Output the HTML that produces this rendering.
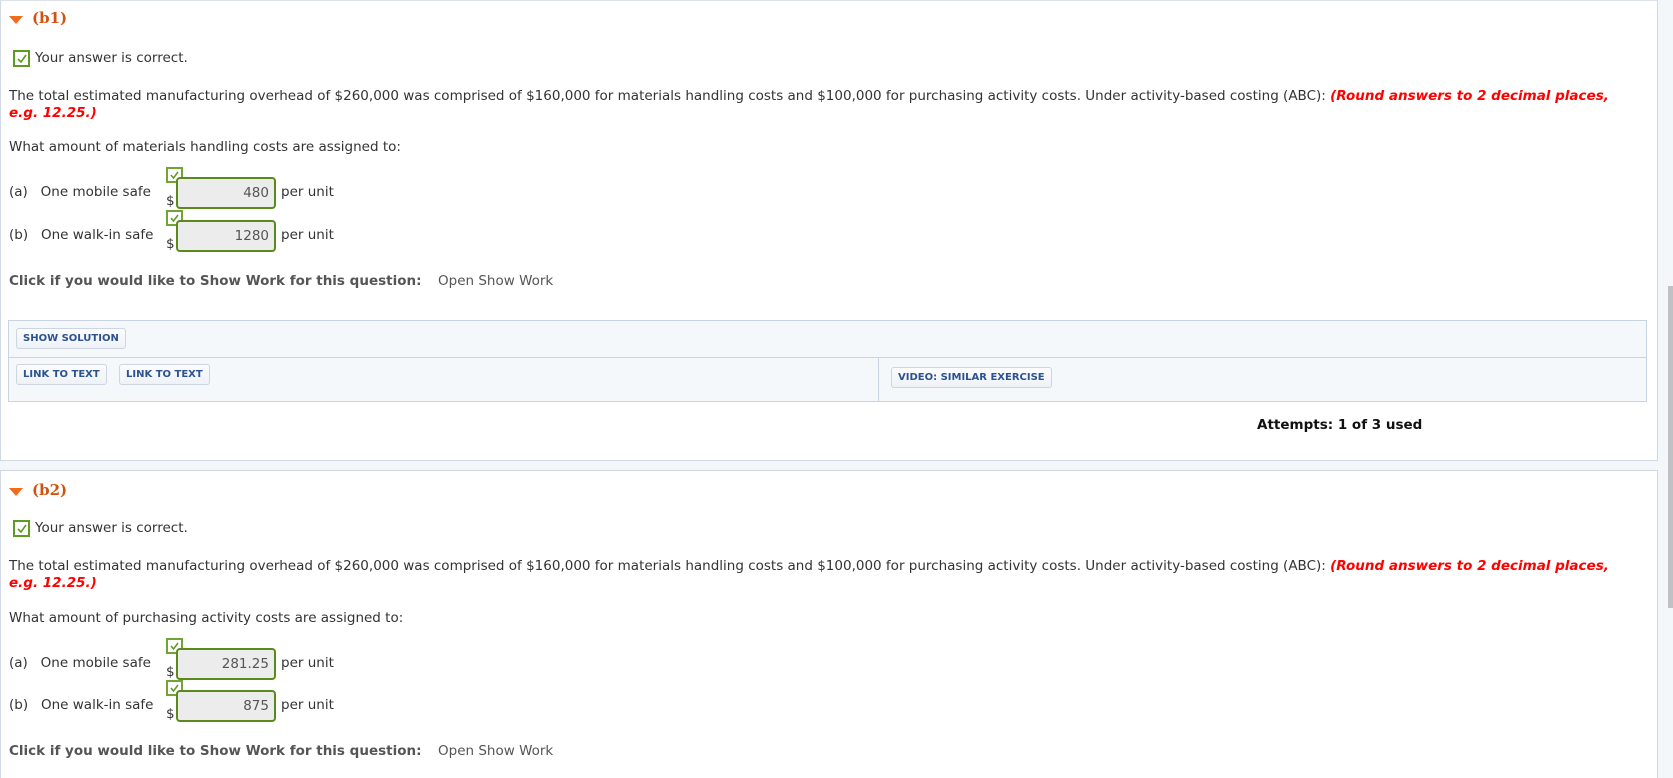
<!DOCTYPE html>
<html><head><meta charset="utf-8"><style>
*{box-sizing:border-box}
html,body{margin:0;width:1673px;height:778px;overflow:hidden}
body{background:#f4f7fa;font-family:"DejaVu Sans","Liberation Sans",sans-serif;color:#333;font-size:13.5px;position:relative}
.p{position:absolute;left:0;width:1658px;background:#fff;border:1px solid #cfd8e3}
.a{position:absolute;white-space:nowrap}
.hd{color:#d4520f;font-weight:bold;font-size:15px;font-family:"DejaVu Serif","Liberation Serif",serif}
.tri{position:absolute;width:0;height:0;border-left:7px solid transparent;border-right:7px solid transparent;border-top:8px solid #f26a1b}
.cb{position:absolute;width:17px;height:17px;border:2px solid #5f9a23;background:#fff}
.cb svg,.ck svg{position:absolute;left:1px;top:1px}
.ck{position:absolute;width:17px;height:16px;border:2px solid #6fa534;background:#fff}
.inp{position:absolute;height:32px;border:2px solid #5a8a1a;border-radius:4px;background:#ececec;text-align:right;padding-right:5px;line-height:28px;color:#555;font-size:13.5px}
.red{color:#f00;font-weight:bold;font-style:italic}
.bold{font-weight:bold;color:#555}
.btn{position:absolute;height:21px;border:1px solid #ccd5e0;border-radius:3px;background:linear-gradient(#fbfcfe,#eef2f7);color:#2d5290;font-weight:bold;font-size:10px;line-height:19px;padding:0 6px}
</style></head><body>

<div class="p" style="top:0;height:461px;border-top-color:#dde3ea">
<div class="tri" style="left:8px;top:15px"></div>
<div class="a hd" style="left:31px;top:8px">(b1)</div>
<div class="cb" style="left:12px;top:49px"><svg width="11" height="11"><path d="M2 6 L5 9 L10 2" stroke="#5f9a23" stroke-width="1.6" fill="none"/></svg></div>
<div class="a" style="left:34px;top:49px">Your answer is correct.</div>
<div class="a" style="left:8px;top:87px">The total estimated manufacturing overhead of $260,000 was comprised of $160,000 for materials handling costs and $100,000 for purchasing activity costs. Under activity-based costing (ABC): <span class="red">(Round answers to 2 decimal places,</span></div>
<div class="a red" style="left:8px;top:104px">e.g. 12.25.)</div>
<div class="a" style="left:8px;top:138px">What amount of materials handling costs are assigned to:</div>
<div class="a" style="left:8px;top:183px">(a)&nbsp;&nbsp; One mobile safe</div>
<div class="ck" style="left:165px;top:166px"><svg width="11" height="10"><path d="M2 5 L4.5 8 L9 2" stroke="#5f9a23" stroke-width="1.5" fill="none"/></svg></div>
<div class="a" style="left:165px;top:192px">$</div>
<div class="inp" style="left:175px;top:176px;width:100px">480</div>
<div class="a" style="left:280px;top:183px">per unit</div>
<div class="a" style="left:8px;top:226px">(b)&nbsp;&nbsp; One walk-in safe</div>
<div class="ck" style="left:165px;top:209px"><svg width="11" height="10"><path d="M2 5 L4.5 8 L9 2" stroke="#5f9a23" stroke-width="1.5" fill="none"/></svg></div>
<div class="a" style="left:165px;top:235px">$</div>
<div class="inp" style="left:175px;top:219px;width:100px">1280</div>
<div class="a" style="left:280px;top:226px">per unit</div>
<div class="a bold" style="left:8px;top:272px">Click if you would like to Show Work for this question:</div>
<div class="a" style="left:437px;top:272px;color:#555">Open Show Work</div>
<div style="position:absolute;left:7px;top:319px;width:1639px;height:82px;background:#f5f8fb;border:1px solid #c9d3e1">
 <div style="position:absolute;left:0;right:0;top:36px;border-top:1px solid #c9d3e1"></div>
 <div style="position:absolute;left:869px;top:36px;bottom:0;border-left:1px solid #c9d3e1"></div>
 <div class="btn" style="left:7px;top:7px">SHOW SOLUTION</div>
 <div class="btn" style="left:7px;top:43px">LINK TO TEXT</div>
 <div class="btn" style="left:110px;top:43px">LINK TO TEXT</div>
 <div class="btn" style="left:882px;top:46px">VIDEO: SIMILAR EXERCISE</div>
</div>
<div class="a" style="left:1256px;top:416px;font-weight:bold;color:#111">Attempts: 1 of 3 used</div>
</div>

<div class="p" style="top:470px;height:308px;border-bottom:none">
<div class="tri" style="left:8px;top:17px"></div>
<div class="a hd" style="left:31px;top:10px">(b2)</div>
<div class="cb" style="left:12px;top:49px"><svg width="11" height="11"><path d="M2 6 L5 9 L10 2" stroke="#5f9a23" stroke-width="1.6" fill="none"/></svg></div>
<div class="a" style="left:34px;top:49px">Your answer is correct.</div>
<div class="a" style="left:8px;top:87px">The total estimated manufacturing overhead of $260,000 was comprised of $160,000 for materials handling costs and $100,000 for purchasing activity costs. Under activity-based costing (ABC): <span class="red">(Round answers to 2 decimal places,</span></div>
<div class="a red" style="left:8px;top:104px">e.g. 12.25.)</div>
<div class="a" style="left:8px;top:139px">What amount of purchasing activity costs are assigned to:</div>
<div class="a" style="left:8px;top:184px">(a)&nbsp;&nbsp; One mobile safe</div>
<div class="ck" style="left:165px;top:167px"><svg width="11" height="10"><path d="M2 5 L4.5 8 L9 2" stroke="#5f9a23" stroke-width="1.5" fill="none"/></svg></div>
<div class="a" style="left:165px;top:193px">$</div>
<div class="inp" style="left:175px;top:177px;width:100px">281.25</div>
<div class="a" style="left:280px;top:184px">per unit</div>
<div class="a" style="left:8px;top:226px">(b)&nbsp;&nbsp; One walk-in safe</div>
<div class="ck" style="left:165px;top:209px"><svg width="11" height="10"><path d="M2 5 L4.5 8 L9 2" stroke="#5f9a23" stroke-width="1.5" fill="none"/></svg></div>
<div class="a" style="left:165px;top:235px">$</div>
<div class="inp" style="left:175px;top:219px;width:100px">875</div>
<div class="a" style="left:280px;top:226px">per unit</div>
<div class="a bold" style="left:8px;top:272px">Click if you would like to Show Work for this question:</div>
<div class="a" style="left:437px;top:272px;color:#555">Open Show Work</div>
</div>

<div style="position:absolute;left:1668px;top:286px;width:5px;height:322px;background:#c1c1c1"></div>
</body></html>
